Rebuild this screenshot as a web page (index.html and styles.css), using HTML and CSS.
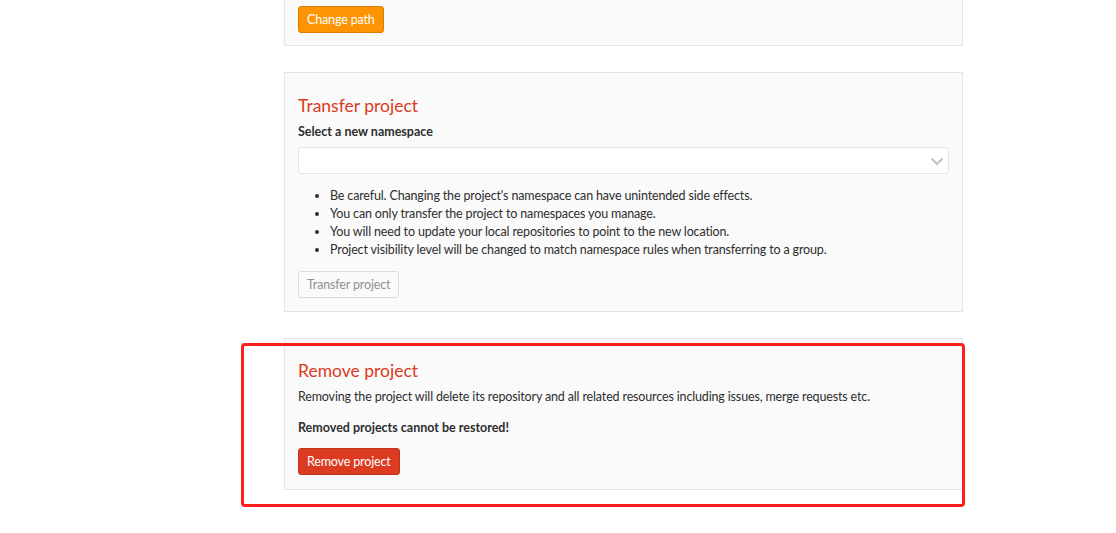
FILE: index.html
```html
<!DOCTYPE html>
<html lang="en">
<head>
<meta charset="utf-8">
<title>Project settings</title>
<link rel="stylesheet" href="styles.css">
</head>
<body>
<main class="page">
  <section class="panel panel-top">
    <button class="btn btn-warning" type="button">Change path</button>
  </section>

  <section class="panel panel-transfer">
    <h4 class="panel-title">Transfer project</h4>
    <label class="field-label">Select a new namespace</label>
    <div class="select">
      <svg class="chevron" width="14" height="9" viewBox="0 0 14 9"><path d="M1.5 1.5 L7 7 L12.5 1.5" fill="none" stroke="#c2c2c2" stroke-width="2.2"/></svg>
    </div>
    <ul class="notes">
      <li>Be careful. Changing the project's namespace can have unintended side effects.</li>
      <li>You can only transfer the project to namespaces you manage.</li>
      <li>You will need to update your local repositories to point to the new location.</li>
      <li>Project visibility level will be changed to match namespace rules when transferring to a group.</li>
    </ul>
    <button class="btn btn-disabled" type="button">Transfer project</button>
  </section>

  <section class="panel panel-remove">
    <h4 class="panel-title">Remove project</h4>
    <p class="desc">Removing the project will delete its repository and all related resources including issues, merge requests etc.</p>
    <p class="warn">Removed projects cannot be restored!</p>
    <button class="btn btn-danger" type="button">Remove project</button>
    <div class="highlight"></div>
  </section>
</main>
</body>
</html>
```

FILE: styles.css
```css
html, body {
  margin: 0;
  padding: 0;
  background: #ffffff;
}
body {
  font-family: "Lato", "Noto Sans", sans-serif;
  font-size: 12.5px;
  letter-spacing: -0.15px;
  color: #2e2e2e;
}
.page {
  width: 679px;
  margin-left: 284px;
  padding-bottom: 40px;
  display: flex;
  flex-direction: column;
  gap: 26px;
}
.panel {
  background: #fafafa;
  border: 1px solid #e5e5e5;
  padding: 0 13px 13px;
  position: relative;
}
.panel-top {
  border-top: 0;
  padding-top: 6px;
  padding-bottom: 12px;
}
.panel-transfer {
  padding-top: 21px;
}
.panel-remove {
  padding-top: 20px;
  padding-bottom: 14px;
}
.panel-title {
  margin: 0;
  font-size: 17.5px;
  letter-spacing: 0;
  font-weight: 400;
  line-height: 24px;
  color: #db3b21;
}
.field-label {
  display: block;
  margin-top: 6px;
  font-weight: 700;
  letter-spacing: 0;
  line-height: 16px;
}
.select {
  margin-top: 7px;
  height: 25px;
  background: #fff;
  border: 1px solid #e5e5e5;
  border-radius: 3px;
  position: relative;
}
.chevron {
  position: absolute;
  right: 4px;
  top: 9px;
}
.notes {
  margin: 13px 0 0;
  padding-left: 32px;
  line-height: 18px;
}
.btn {
  display: inline-block;
  height: 27px;
  padding: 0 8px;
  font-family: inherit;
  font-size: 12.5px;
  letter-spacing: -0.15px;
  line-height: 25px;
  border-radius: 3px;
  border: 1px solid transparent;
}
.btn-warning {
  background: #fc9403;
  border-color: #de7e00;
  color: #fff;
}
.btn-disabled {
  margin-top: 12px;
  background: #fafafa;
  border-color: #dcdcdc;
  color: #909090;
}
.btn-danger {
  background: #db3b21;
  border-color: #c0341d;
  color: #fff;
}
.desc {
  margin: 5px 0 0;
  line-height: 18px;
}
.warn {
  margin: 13px 0 0;
  font-weight: 700;
  letter-spacing: 0;
  line-height: 18px;
}
.panel-remove .btn-danger {
  margin-top: 11px;
}
.highlight {
  position: absolute;
  left: -44px;
  top: 4px;
  width: 718px;
  height: 158px;
  border: 3px solid #ff1f1f;
  border-radius: 4px;
  pointer-events: none;
}
```
